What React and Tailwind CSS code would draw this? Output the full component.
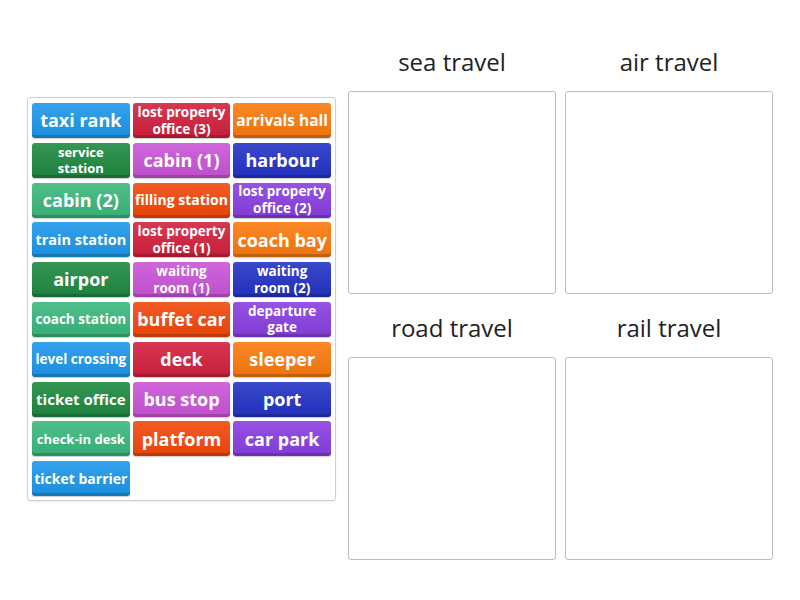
const COLORS = {
  blue: 'bg-[#1f98ea]',
  red: 'bg-[#d3223f]',
  orange: 'bg-[#fb7b10]',
  dkgreen: 'bg-[#208a42]',
  orchid: 'bg-[#cb55d8]',
  navy: 'bg-[#2534c6]',
  green: 'bg-[#3cb87d]',
  orangered: 'bg-[#f2490c]',
  purple: 'bg-[#8a40e2]',
};

const tiles = [
  { text: 'taxi rank', color: 'blue', size: 'text-[18px]' },
  { text: 'lost property office (3)', color: 'red', size: 'text-[13.5px] leading-[15px]' },
  { text: 'arrivals hall', color: 'orange', size: 'text-[15.5px]' },
  { text: 'service station', color: 'dkgreen', size: 'text-[13px] leading-[15px]' },
  { text: 'cabin (1)', color: 'orchid', size: 'text-[18px]' },
  { text: 'harbour', color: 'navy', size: 'text-[18px]' },
  { text: 'cabin (2)', color: 'green', size: 'text-[18px]' },
  { text: 'filling station', color: 'orangered', size: 'text-[14px]' },
  { text: 'lost property office (2)', color: 'purple', size: 'text-[13.5px] leading-[15px]' },
  { text: 'train station', color: 'blue', size: 'text-[14.5px]' },
  { text: 'lost property office (1)', color: 'red', size: 'text-[13.5px] leading-[15px]' },
  { text: 'coach bay', color: 'orange', size: 'text-[18px]' },
  { text: 'airpor', color: 'dkgreen', size: 'text-[18px]' },
  { text: 'waiting room (1)', color: 'orchid', size: 'text-[13.5px] leading-[15px] px-3' },
  { text: 'waiting room (2)', color: 'navy', size: 'text-[13.5px] leading-[15px] px-3' },
  { text: 'coach station', color: 'green', size: 'text-[13.5px]' },
  { text: 'buffet car', color: 'orangered', size: 'text-[18px]' },
  { text: 'departure gate', color: 'purple', size: 'text-[13.5px] leading-[15px] px-3' },
  { text: 'level crossing', color: 'blue', size: 'text-[13.5px]' },
  { text: 'deck', color: 'red', size: 'text-[18px]' },
  { text: 'sleeper', color: 'orange', size: 'text-[18px]' },
  { text: 'ticket office', color: 'dkgreen', size: 'text-[15px]' },
  { text: 'bus stop', color: 'orchid', size: 'text-[18px]' },
  { text: 'port', color: 'navy', size: 'text-[18px]' },
  { text: 'check-in desk', color: 'green', size: 'text-[13px]' },
  { text: 'platform', color: 'orangered', size: 'text-[18px]' },
  { text: 'car park', color: 'purple', size: 'text-[18px]' },
  { text: 'ticket barrier', color: 'blue', size: 'text-[14px]' },
];

const groups = ['sea travel', 'air travel', 'road travel', 'rail travel'];

function Tile({ text, color, size }) {
  return (
    <div
      className={`${COLORS[color]} h-[35px] rounded-[3px] flex items-center justify-center text-center text-white font-bold whitespace-normal overflow-hidden bg-gradient-to-b from-white/10 to-black/5 shadow-[inset_0_-3px_0_rgba(0,0,0,0.18),0_1px_1px_rgba(0,0,0,0.2)] ${size}`}
    >
      <span className="px-0.5 leading-tight">{text}</span>
    </div>
  );
}

export default function App() {
  return (
    <div className="w-[800px] h-[600px] bg-white flex font-['Open_Sans',sans-serif]">
      {/* Tile pool */}
      <div className="ml-[27px] mt-[97px] w-[309px] h-[404px] border border-[#cfcfcf] rounded-[3px] pt-[5px] px-[4px] shadow-[0_1px_2px_rgba(0,0,0,0.08)]">
        <div className="grid grid-cols-3 gap-x-[3px] gap-y-[4.8px]">
          {tiles.map((t) => (
            <Tile key={t.text} {...t} />
          ))}
        </div>
      </div>

      {/* Drop groups */}
      <div className="ml-[12px] mt-[33px] grid grid-cols-[208px_208px] gap-x-[9px] gap-y-[5px] content-start">
        {groups.map((g) => (
          <div key={g} className="flex flex-col">
            <div className="h-[58px] flex items-center justify-center text-[24px] text-[#222] leading-none">
              {g}
            </div>
            <div className="h-[203px] border border-[#bdbdbd] rounded-[3px] bg-white" />
          </div>
        ))}
      </div>
    </div>
  );
}
